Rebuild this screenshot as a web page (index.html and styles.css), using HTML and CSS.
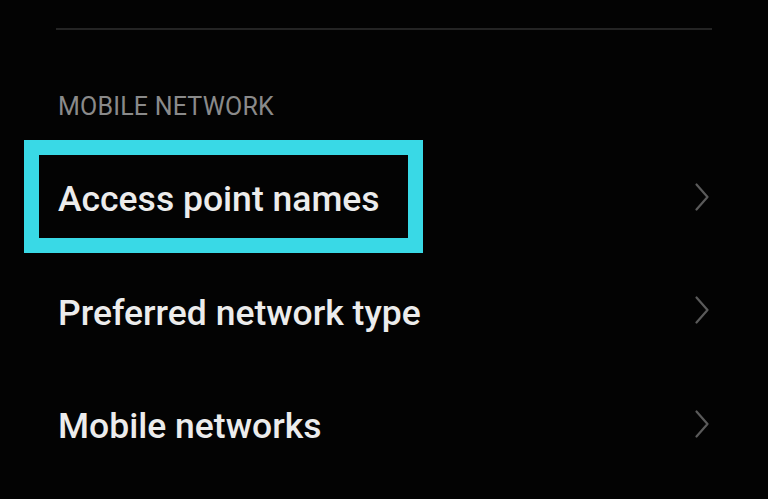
FILE: index.html
```html
<!DOCTYPE html>
<html lang="en">
<head>
<meta charset="utf-8">
<title>Mobile network</title>
<link rel="stylesheet" href="styles.css">
</head>
<body>
<div class="screen">
  <div class="divider"></div>
  <div class="section-title">MOBILE NETWORK</div>
  <ul class="list">
    <li class="row">
      <span class="highlight"></span>
      <span class="label">Access point names</span>
      <svg class="chevron" width="14" height="28" viewBox="0 0 14 28"><polyline points="1.5,1.5 12.5,14 1.5,26.5" fill="none" stroke="#5a5a5a" stroke-width="2.2" stroke-linecap="round" stroke-linejoin="round"/></svg>
    </li>
    <li class="row">
      <span class="label">Preferred network type</span>
      <svg class="chevron" width="14" height="28" viewBox="0 0 14 28"><polyline points="1.5,1.5 12.5,14 1.5,26.5" fill="none" stroke="#5a5a5a" stroke-width="2.2" stroke-linecap="round" stroke-linejoin="round"/></svg>
    </li>
    <li class="row">
      <span class="label">Mobile networks</span>
      <svg class="chevron" width="14" height="28" viewBox="0 0 14 28"><polyline points="1.5,1.5 12.5,14 1.5,26.5" fill="none" stroke="#5a5a5a" stroke-width="2.2" stroke-linecap="round" stroke-linejoin="round"/></svg>
    </li>
  </ul>
</div>
</body>
</html>
```
FILE: styles.css
```css
html, body {
  margin: 0;
  padding: 0;
  background: #030303;
  height: 100%;
}
body {
  font-family: Roboto, "Noto Sans", "Liberation Sans", sans-serif;
  overflow: hidden;
}
.screen {
  width: 768px;
  height: 499px;
  padding-top: 28px;
  box-sizing: border-box;
}
.divider {
  height: 2px;
  margin: 0 56px 0 56px;
  background: #242424;
}
.section-title {
  margin: 63px 0 0 58px;
  font-size: 25px;
  line-height: 28px;
  letter-spacing: 0.2px;
  color: #8a8a8a;
  font-weight: 400;
}
.list {
  list-style: none;
  margin: 19px 0 0 0;
  padding: 0;
}
.row {
  position: relative;
  height: 113.5px;
  display: flex;
  align-items: center;
  justify-content: space-between;
  padding: 0 58px 0 58px;
  box-sizing: border-box;
}
.label {
  font-size: 35.5px;
  line-height: 42px;
  padding-top: 5px;
  font-weight: 500;
  color: #ececec;
  position: relative;
}
.chevron {
  display: block;
  margin-right: 1px;
}
.highlight {
  position: absolute;
  left: 24px;
  top: 0;
  width: 399px;
  height: 113px;
  box-sizing: border-box;
  border: 15px solid #39d9e6;
}
```
